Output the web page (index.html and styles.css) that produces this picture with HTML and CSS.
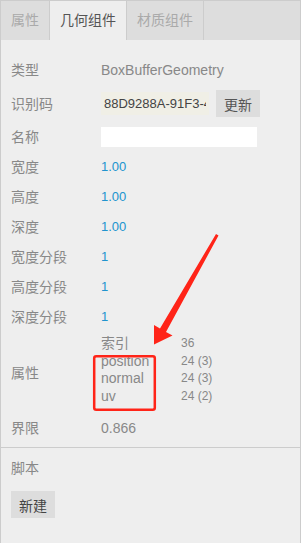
FILE: index.html
```html
<!DOCTYPE html>
<html lang="zh">
<head>
  <meta charset="UTF-8" />
  <meta name="viewport" content="width=device-width, initial-scale=1.0"/>
  <title>几何组件</title>
  <link rel="stylesheet" href="styles.css">
</head>
<body>

  <div class="panel">
    <div class="tabs">
      <span class="tab">属性</span>
      <span class="tab active">几何组件</span>
      <span class="tab">材质组件</span>
    </div>

    <div class="content">
      <div class="row">
        <span class="label">类型</span>
        <span class="text">BoxBufferGeometry</span>
      </div>
      <div class="row">
        <span class="label">识别码</span>
        <input class="uuid" type="text" value="88D9288A-91F3-46C2-9B7E-1C0F2A3D5E6B" />
        <button class="btn">更新</button>
      </div>
      <div class="row">
        <span class="label">名称</span>
        <input class="nom" type="text" value="" />
      </div>
      <div class="row">
        <span class="label">宽度</span>
        <span class="number">1.00</span>
      </div>
      <div class="row">
        <span class="label">高度</span>
        <span class="number">1.00</span>
      </div>
      <div class="row">
        <span class="label">深度</span>
        <span class="number">1.00</span>
      </div>
      <div class="row">
        <span class="label">宽度分段</span>
        <span class="number">1</span>
      </div>
      <div class="row">
        <span class="label">高度分段</span>
        <span class="number">1</span>
      </div>
      <div class="row">
        <span class="label">深度分段</span>
        <span class="number">1</span>
      </div>
      <div class="row attr-row">
        <span class="label">属性</span>
        <div class="attr-list">
          <div class="attr"><span class="attr-nom">索引</span><span class="attr-val">36</span></div>
          <div class="attr"><span class="attr-nom">position</span><span class="attr-val">24 (3)</span></div>
          <div class="attr"><span class="attr-nom">normal</span><span class="attr-val">24 (3)</span></div>
          <div class="attr"><span class="attr-nom">uv</span><span class="attr-val">24 (2)</span></div>
        </div>
      </div>
      <div class="row">
        <span class="label">界限</span>
        <span class="text">0.866</span>
      </div>
    </div>

    <div class="scripts">
      <div class="label">脚本</div>
      <button class="btn btn-new">新建</button>
    </div>

    <svg class="annotation" width="302" height="543" viewBox="0 0 302 543">
      <polygon points="216,234 218.5,235.5 166,332 172.5,335.5 154,344.5 154,325 160,328.5" fill="#ff2418"/>
      <rect x="94.2" y="356.2" width="60.6" height="53.6" rx="2" fill="none" stroke="#ff2418" stroke-width="2.5"/>
    </svg>
  </div>

</body>
</html>
```

FILE: styles.css
```css
body {
  margin: 0;
  background: #fff;
  font-family: "Liberation Sans", "Noto Sans CJK SC", sans-serif;
  font-size: 14px;
  color: #888;
}
.panel {
  position: relative;
  width: 301px;
  height: 543px;
  box-sizing: border-box;
  border: 1px solid #ccc;
  border-bottom: none;
  background: #eee;
}
.tabs {
  display: flex;
  height: 39px;
  background: #ddd;
}
.tab {
  padding: 0 10px;
  line-height: 39px;
  color: #aaa;
  border-right: 1px solid #ccc;
}
.tab.active {
  background: #eee;
  color: #555;
}
.content {
  padding: 20px 10px 0 10px;
}
.row {
  display: flex;
  align-items: center;
  min-height: 20px;
  margin-bottom: 10px;
}
.label {
  width: 90px;
  line-height: 20px;
  flex-shrink: 0;
}
.text {
  line-height: 20px;
}
.number {
  color: #2194ce;
  font-size: 13px;
  line-height: 20px;
}
input {
  border: none;
  outline: none;
  font-family: "Liberation Sans", "Noto Sans CJK SC", sans-serif;
  box-sizing: border-box;
}
.uuid {
  width: 108px;
  height: 23px;
  padding: 0 3px;
  background: #f0efe6;
  color: #444;
  font-size: 13px;
}
.nom {
  width: 156px;
  height: 20px;
  background: #fff;
}
.btn {
  height: 27px;
  padding: 0 8px;
  border: none;
  background: #ddd;
  color: #555;
  font-family: "Liberation Sans", "Noto Sans CJK SC", sans-serif;
  font-size: 14px;
  cursor: pointer;
}
.row .btn {
  margin-left: 7px;
}
.attr-row {
  margin-top: -2px;
  margin-bottom: 7px;
}
.attr-list {
  padding-bottom: 6px;
}
.attr {
  display: flex;
  align-items: center;
  height: 17.5px;
  line-height: 17.5px;
}
.attr-nom {
  width: 80px;
}
.attr-val {
  font-size: 12px;
}
.scripts {
  border-top: 1px solid #ccc;
  margin-top: -1px;
  padding: 10px;
}
.btn-new {
  margin-top: 13px;
  color: #444;
}
.annotation {
  position: absolute;
  left: -1px;
  top: -1px;
  pointer-events: none;
}
```
